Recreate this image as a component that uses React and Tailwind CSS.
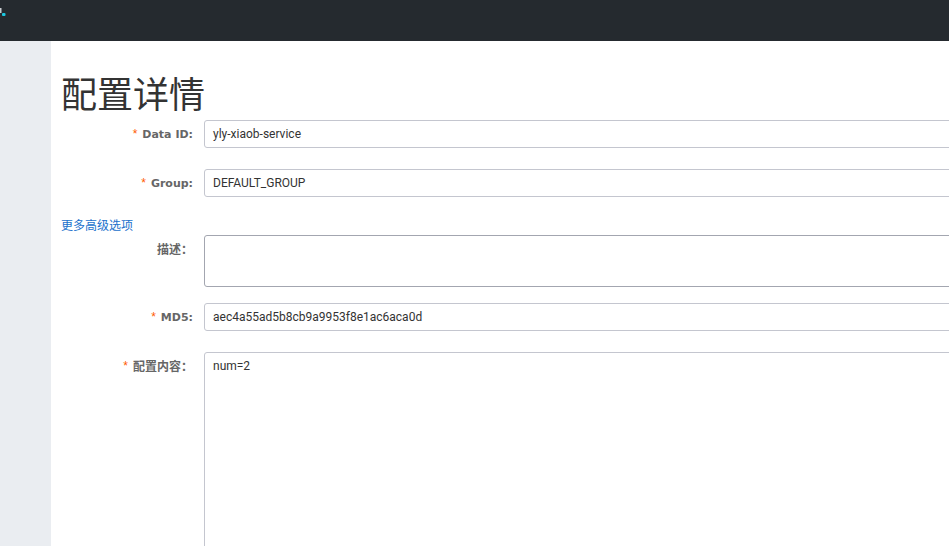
import React from "react";

const font = "font-['Liberation_Sans','Noto_Sans_CJK_SC',sans-serif]";

function Label({ required, children, cjk }) {
  return (
    <div className="w-[132px] h-[28px] shrink-0 flex items-center justify-end text-[#666666] whitespace-nowrap">
      {required && <span className="text-[#ff5a00] mr-[5px] text-[12px] leading-none font-normal font-['Liberation_Sans',sans-serif]">*</span>}
      {cjk ? (
        <span className="text-[12px] leading-none font-bold font-['Noto_Sans_CJK_SC',sans-serif]">{children}</span>
      ) : (
        <span className="text-[11px] leading-none font-bold font-['DejaVu_Sans',sans-serif]">{children}</span>
      )}
    </div>
  );
}

function Row({ label, required, cjk, children, className = "" }) {
  return (
    <div className={`flex gap-[11px] ${className}`}>
      <Label required={required} cjk={cjk}>{label}</Label>
      {children}
    </div>
  );
}

function Input({ value }) {
  return (
    <div className="w-[820px] shrink-0 h-[28px] border border-[#c4c6cf] rounded-[3px] bg-white px-[8px] leading-[26px] text-[12px] text-[#333333] whitespace-nowrap font-['Roboto',sans-serif]">
      {value}
    </div>
  );
}

export default function App() {
  return (
    <div className={`w-[949px] h-[546px] overflow-hidden bg-white flex flex-col ${font}`}>
      <header className="h-[41px] shrink-0 bg-[#252a2f]">
        <svg width="10" height="41" viewBox="0 0 10 41" className="block">
          <rect x="0" y="8" width="1.5" height="5" fill="#c9ccd1" />
          <rect x="2" y="13" width="3.5" height="3" rx="1" fill="#1dc8e0" />
        </svg>
      </header>
      <div className="flex flex-1 min-h-0">
        <aside className="w-[51px] shrink-0 bg-[#eaedf1]" />
        <main className="flex-1 min-w-0 pl-[10px] overflow-hidden">
          <h1 className="mt-[28px] text-[36px] leading-[54px] font-normal text-[#333333] whitespace-nowrap">
            配置详情
          </h1>
          <div className="mt-[-3px]">
            <Row label="Data ID:" required className="mb-[21px]">
              <Input value="yly-xiaob-service" />
            </Row>
            <Row label="Group:" required className="mb-[20px]">
              <Input value="DEFAULT_GROUP" />
            </Row>
            <div className="text-[12px] leading-[18px] text-[#2271cc]">更多高级选项</div>
            <Row label="描述：" cjk className="mb-[16px]">
              <div className="w-[820px] shrink-0 h-[52px] border border-[#a3a6b0] rounded-[3px] bg-white" />
            </Row>
            <Row label="MD5:" required className="mb-[21px]">
              <Input value="aec4a55ad5b8cb9a9953f8e1ac6aca0d" />
            </Row>
            <Row label="配置内容：" cjk required>
              <div className="w-[820px] shrink-0 h-[300px] border border-[#c4c6cf] rounded-[3px] bg-white px-[8px] pt-[4px] leading-[18px] text-[12px] text-[#333333] font-['Roboto',sans-serif]">
                num=2
              </div>
            </Row>
          </div>
        </main>
      </div>
    </div>
  );
}
